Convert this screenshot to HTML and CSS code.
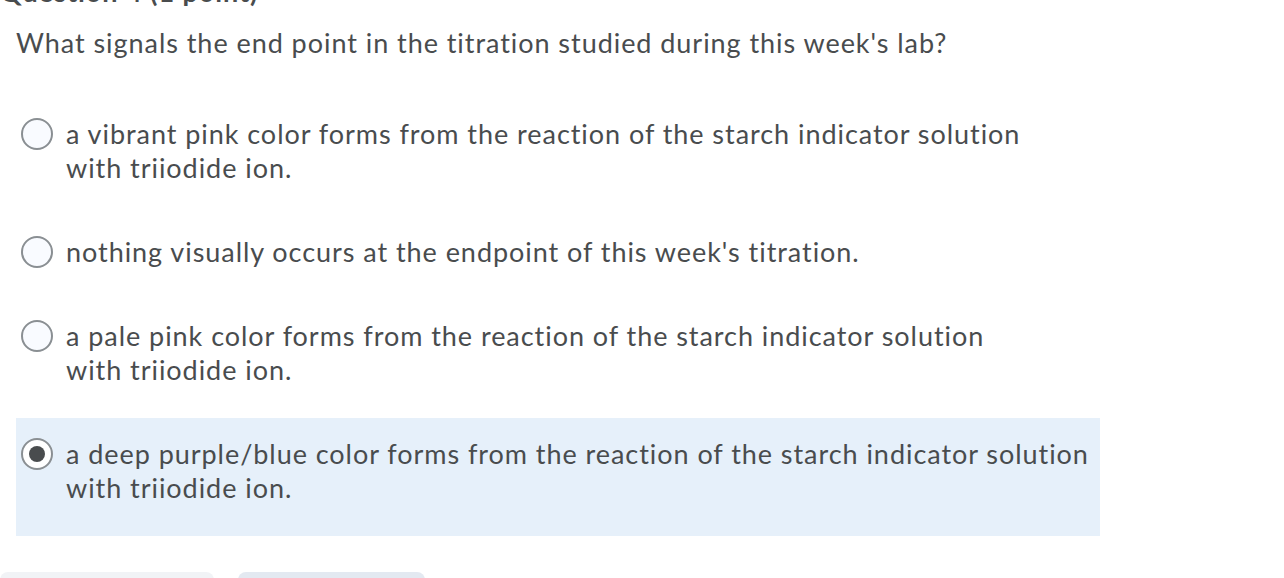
FILE: index.html
```html
<!DOCTYPE html>
<html>
<head>
<meta charset="utf-8">
<link rel="stylesheet" href="styles.css">
</head>
<body>
<div class="page">
  <h2 class="q-header">Question 4 (1 point)</h2>
  <p class="q-text">What signals the end point in the titration studied during this week's lab?</p>
  <div class="options">
    <label class="option">
      <span class="radio"></span>
      <span class="label">a vibrant pink color forms from the reaction of the starch indicator solution<br>with triiodide ion.</span>
    </label>
    <label class="option">
      <span class="radio"></span>
      <span class="label">nothing visually occurs at the endpoint of this week's titration.</span>
    </label>
    <label class="option">
      <span class="radio"></span>
      <span class="label">a pale pink color forms from the reaction of the starch indicator solution<br>with triiodide ion.</span>
    </label>
    <label class="option selected">
      <span class="radio checked"></span>
      <span class="label">a deep purple/blue color forms from the reaction of the starch indicator solution<br>with triiodide ion.</span>
    </label>
  </div>
  <div class="buttons">
    <span class="btn btn-light"></span>
    <span class="btn btn-blue"></span>
  </div>
</div>
</body>
</html>
```

FILE: styles.css
```css
html, body {
  margin: 0;
  padding: 0;
  background: #ffffff;
}
body {
  font-family: Lato, "Open Sans", sans-serif;
  color: #494c4e;
  overflow: hidden;
  font-variant-ligatures: none;
}
.page {
  width: 1284px;
  height: 578px;
  overflow: hidden;
}
.q-header {
  margin: -22px 0 0 0;
  padding: 0;
  font-size: 27px;
  line-height: 28px;
  font-weight: 700;
  letter-spacing: 0.95px;
  color: #494c4e;
}
.q-text {
  margin: 0;
  padding: 20px 0 0 16px;
  font-size: 27px;
  line-height: 34px;
  letter-spacing: 0.95px;
}
.options {
  margin: 38px 0 0 16px;
  width: 1084px;
}
.option {
  display: flex;
  align-items: flex-start;
  padding: 19px 0 31px 5px;
  font-size: 27px;
  line-height: 34px;
  letter-spacing: 0.95px;
}
.option.selected {
  background: #e6f0fa;
}
.radio {
  flex: none;
  box-sizing: border-box;
  width: 32px;
  height: 32px;
  margin-top: 1px;
  margin-right: 13px;
  border: 2px solid #8a8f93;
  border-radius: 50%;
  background: #f9fbff;
  display: flex;
  align-items: center;
  justify-content: center;
}
.radio.checked {
  background: #ffffff;
}
.radio.checked::after {
  content: "";
  width: 16px;
  height: 16px;
  border-radius: 50%;
  background: #494c4e;
}
.buttons {
  display: flex;
  gap: 24px;
  margin-top: 36px;
}
.btn {
  display: block;
  height: 40px;
  border-radius: 8px;
}
.btn-light {
  width: 214px;
  background: #f1f3f6;
}
.btn-blue {
  width: 187px;
  background: #e3e9f1;
}
```
